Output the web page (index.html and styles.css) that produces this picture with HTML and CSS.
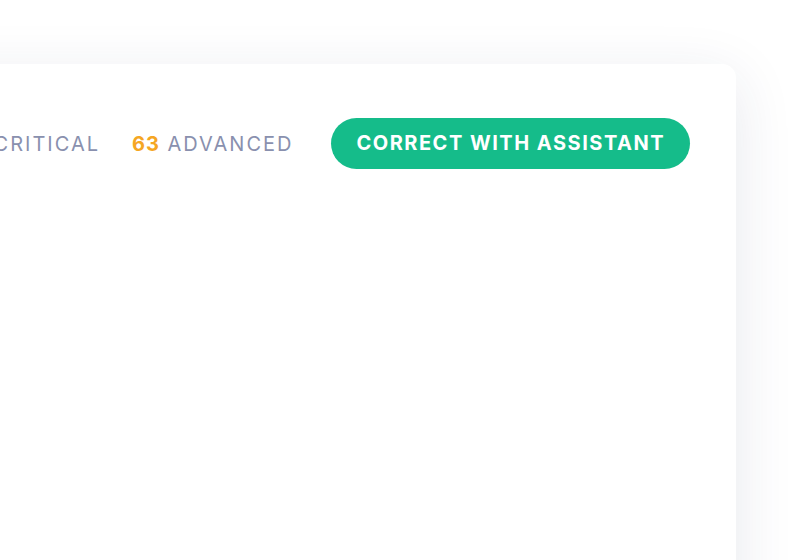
FILE: index.html
```html
<!DOCTYPE html>
<html lang="en">
<head>
    <meta charset="UTF-8">
    <meta name="viewport" content="width=device-width, initial-scale=1.0">
    <title>Report</title>
    <link rel="stylesheet" href="styles.css">
</head>
<body>
    <div class="card">
        <div class="card-header">
            <div class="stats">
                <span class="stat"><b class="num critical">12</b> CRITICAL</span>
                <span class="stat"><b class="num advanced">63</b> ADVANCED</span>
            </div>
            <a href="#" class="assist-button">CORRECT WITH ASSISTANT</a>
        </div>
    </div>
</body>
</html>
```

FILE: styles.css
```css
* {
    margin: 0;
    padding: 0;
    box-sizing: border-box;
    font-family: 'Inter', 'Liberation Sans', Arial, sans-serif;
}

html, body {
    height: 100%;
    overflow: hidden;
}

body {
    background-color: #fff;
}

/* the card runs past the left and bottom edge of the view */
.card {
    height: 620px;
    margin: 64px 64px 0 -300px;
    background: #fff;
    border-radius: 14px;
    box-shadow: 0 14px 60px rgba(40, 45, 95, 0.11);
}

.card-header {
    display: flex;
    justify-content: flex-end;
    align-items: center;
    padding: 54px 46px 0 0;
}

.stats {
    display: flex;
    gap: 32px;
    margin-right: 38px;
}

.stat {
    font-size: 20px;
    letter-spacing: 2px;
    color: #8990ae;
    white-space: nowrap;
}

.num {
    font-weight: 700;
    letter-spacing: 1px;
}

.num.critical {
    color: #e8505b;
}

.num.advanced {
    color: #f5a623;
}

.assist-button {
    display: inline-block;
    height: 51px;
    line-height: 51px;
    padding: 0 25px;
    border-radius: 26px;
    background-color: #15bc8a;
    color: #fff;
    font-size: 20px;
    font-weight: 700;
    letter-spacing: 1.5px;
    text-decoration: none;
    white-space: nowrap;
}
```
